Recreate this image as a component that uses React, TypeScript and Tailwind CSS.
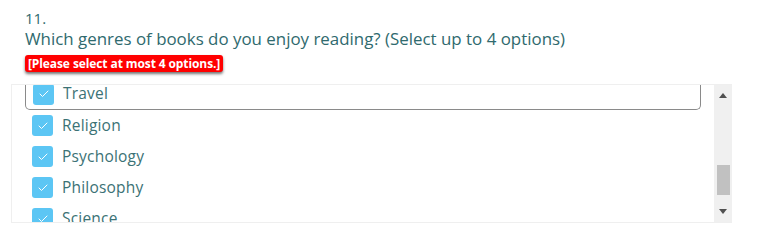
import { Check } from "lucide-react";

const options = ["Travel", "Religion", "Psychology", "Philosophy", "Science"];

function OptionRow({ label, focused }: { label: string; focused?: boolean }) {
  return (
    <div
      className={`flex h-[31px] items-center gap-[9px] pl-[7px] ${
        focused ? "rounded-b-[5px] border border-t-0 border-[#8a8a8a] pl-[6px]" : ""
      }`}
    >
      <span className="grid size-[21px] shrink-0 place-items-center rounded-[3px] bg-[#5cc6f4]">
        <Check className="size-[12px] text-white" strokeWidth={2} />
      </span>
      <span className="text-[15.5px] font-medium tracking-[0.2px] text-[#3b7275]">{label}</span>
    </div>
  );
}

export default function App() {
  return (
    <div
      className="h-[250px] w-[768px] overflow-hidden bg-white"
      style={{ fontFamily: '"Open Sans", "Noto Sans", sans-serif' }}
    >
      <div className="pl-[25px] pt-[8px]">
        <p className="text-[15px] leading-[20px] text-[#2f6a6e]">11.</p>
        <p className="text-[16.9px] leading-[22px] text-[#2f6a6e]">
          Which genres of books do you enjoy reading? (Select up to 4 options)
        </p>
        <div className="mt-[4px] inline-block rounded-[3px] bg-[#ff0000] px-[3px] text-[12px] font-bold leading-[17px] tracking-[-0.1px] text-white shadow-[0_2px_3px_rgba(0,0,0,0.55)]">
          [Please select at most 4 options.]
        </div>
      </div>

      <div className="ml-[11px] mt-[10px] flex h-[139px] w-[721px] border-l border-t border-b border-[#efefef]">
        <div className="flex-1 overflow-hidden pl-[13px] pr-[13px]">
          <div className="-mt-[6px]">
            {options.map((o, i) => (
              <OptionRow key={o} label={o} focused={i === 0} />
            ))}
          </div>
        </div>
        <div className="flex w-[18px] flex-col items-center bg-[#f0f0f0] py-[6px]">
          <svg width="8" height="5" viewBox="0 0 8 5" className="mt-[2px]">
            <path d="M0 5 L4 0 L8 5 Z" fill="#505050" />
          </svg>
          <div className="mt-[67px] h-[30px] w-[13px] bg-[#c1c1c1]" />
          <div className="flex-1" />
          <svg width="8" height="5" viewBox="0 0 8 5" className="mb-[2px]">
            <path d="M0 0 L8 0 L4 5 Z" fill="#505050" />
          </svg>
        </div>
      </div>
    </div>
  );
}
